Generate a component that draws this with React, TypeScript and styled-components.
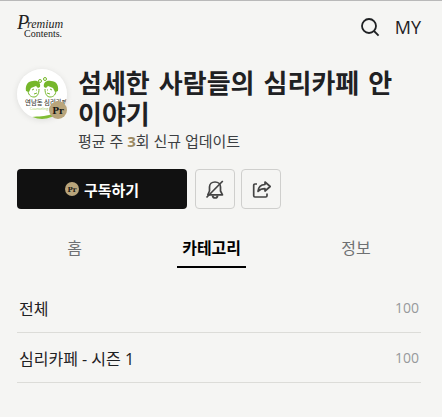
import React from "react";
import styled, { createGlobalStyle } from "styled-components";

const GlobalStyle = createGlobalStyle`
  * { box-sizing: border-box; }
  body {
    margin: 0;
    background: #f5f5f3;
    color: #1f2123;
    font-family: "Open Sans", "Noto Sans CJK KR", sans-serif;
    font-size: 16px;
  }
  h1, p, ul { margin: 0; padding: 0; }
  button { font: inherit; cursor: pointer; }
  a { color: inherit; text-decoration: none; }
`;

const Page = styled.div`
  border-top: 1px solid #b9b9b9;
  padding: 0 21px 0 17px;
`;

const Header = styled.header`
  display: flex;
  align-items: center;
  justify-content: space-between;
  height: 52px;
`;

const LogoLink = styled.a`
  display: flex;
`;

const HeaderActions = styled.div`
  display: flex;
  align-items: center;
  gap: 15px;
`;

const IconButton = styled.button`
  display: flex;
  padding: 0;
  border: 0;
  background: none;
  color: #1f2123;
`;

const MyLink = styled.a`
  font-size: 18px;
  line-height: 24px;
`;

const Channel = styled.section`
  display: flex;
  align-items: flex-start;
  gap: 11px;
  padding-top: 16px;
`;

const Avatar = styled.div`
  position: relative;
  flex: none;
  width: 50px;
  height: 50px;
  border-radius: 50%;
  box-shadow: 0 1px 6px rgba(0, 0, 0, 0.1);
`;

const AvatarBadge = styled.span`
  position: absolute;
  right: 0;
  bottom: 0;
  display: flex;
`;

const Title = styled.h1`
  font-family: "DejaVu Sans", "Noto Sans CJK KR", sans-serif;
  font-size: 26px;
  font-weight: 700;
  line-height: 31px;
  word-break: keep-all;
`;

const Frequency = styled.p`
  color: #3c3f42;
  font-size: 15px;
  line-height: 20px;

  strong {
    color: #9c8a62;
    font-weight: 700;
  }
`;

const Actions = styled.div`
  display: flex;
  gap: 6px;
  margin-top: 18px;
`;

const SubscribeButton = styled.button`
  display: flex;
  align-items: center;
  justify-content: center;
  gap: 5px;
  flex: 0 1 170px;
  height: 40px;
  margin-right: 2px;
  padding: 0;
  border: 0;
  border-radius: 4px;
  background: #111;
  color: #fff;
  font-size: 15px;
  font-weight: 700;
`;

const SquareButton = styled.button`
  display: flex;
  align-items: center;
  justify-content: center;
  width: 40px;
  height: 40px;
  padding: 0;
  border: 1px solid #cfcfcd;
  border-radius: 4px;
  background: transparent;
  color: #444;
`;

const Tabs = styled.nav`
  display: flex;
  justify-content: space-around;
  margin-top: 19px;
`;

const Tab = styled.a<{ $active?: boolean }>`
  padding: 8px 5px 6px;
  border-bottom: 2px solid ${(p) => (p.$active ? "#000" : "transparent")};
  color: ${(p) => (p.$active ? "#000" : "#6e7072")};
  font-weight: ${(p) => (p.$active ? 700 : 400)};
  line-height: 24px;
`;

const CategoryList = styled.ul`
  margin-top: 15px;
  list-style: none;
`;

const CategoryLink = styled.a`
  display: flex;
  align-items: center;
  justify-content: space-between;
  height: 50px;
  padding: 0 2px;
  border-bottom: 1px solid #dcdcd8;
`;

const Count = styled.span`
  color: #97999b;
  font-size: 14px;
`;

const Logo = () => (
  <svg width="50" height="28" viewBox="0 0 50 28" role="img" aria-label="Premium Contents" fill="#222">
    <text x="0" y="16" fontFamily="Liberation Serif, serif" fontStyle="italic" fontSize="20">P</text>
    <text x="10" y="15" fontFamily="Liberation Serif, serif" fontStyle="italic" fontSize="12">remium</text>
    <text x="7" y="24" fontFamily="Liberation Serif, serif" fontSize="10">Contents.</text>
  </svg>
);

const SearchIcon = () => (
  <svg width="20" height="20" viewBox="0 0 20 20" fill="none" stroke="currentColor" strokeWidth="1.8" aria-hidden="true">
    <circle cx="9" cy="9" r="7" />
    <path d="M14 14l4.600 4.600" />
  </svg>
);

const PrBadge = ({ size }: { size: number }) => (
  <svg width={size} height={size} viewBox="0 0 20 20" aria-hidden="true">
    <circle cx="10" cy="10" r="10" fill="#b9a57b" />
    <text x="10" y="14" textAnchor="middle" fontFamily="DejaVu Serif, serif" fontWeight="700" fontSize="10" fill="#1c1a16">Pr</text>
  </svg>
);

const ChannelPicture = () => (
  <svg width="50" height="50" viewBox="0 0 50 50" role="img" aria-label="연남동 심리카페">
    <defs>
      <clipPath id="round"><circle cx="25" cy="25" r="25" /></clipPath>
    </defs>
    <g clipPath="url(#round)">
      <path d="M0 0h50v50H0z" fill="#fff" />
      <path d="M9 22c-1-6 2-10 7-10 5-1 8 2 7 6l-2 1-2-2-5 2-2 4z" fill="#76b72b" />
      <path d="M41 22c1-6-2-10-7-10-5-1-8 2-7 6l2 1 2-2 5 2 2 4z" fill="#76b72b" />
      <g fill="none" stroke="#76b72b" strokeWidth="1">
        <path d="M11 21c0 4 2 7 6 7 3 0 5-3 5-8" />
        <path d="M39 21c0 4-2 7-6 7-3 0-5-3-5-8" />
        <path d="M15 21l2-1M19 21h1M30 21h1M33 20l2 1M17 25l3-1M30 24l3 1" />
        <circle cx="23" cy="12" r="1.500" />
        <circle cx="28" cy="10" r="1.500" />
      </g>
      <text x="8" y="36" fontFamily="Noto Sans CJK KR, sans-serif" fontWeight="500" fontSize="6.400" fill="#3d4038">연남동 심리카페</text>
      <text x="13" y="41" fontFamily="Open Sans, sans-serif" fontSize="3.500" fill="#9bce58">Counseling cafe</text>
      <path d="M15 48c7-1 12 0 20-3v5H15z" fill="#80bd35" />
    </g>
  </svg>
);

const BellOffIcon = () => (
  <svg width="20" height="22" viewBox="0 0 20 22" fill="none" stroke="currentColor" strokeWidth="1.700" strokeLinejoin="round" aria-hidden="true">
    <path d="M4.500 13V9C4.500 6 6.800 4 10 4S15.500 6 15.500 9V13L17.500 16.800H2.800L4.500 13" />
    <path d="M7.500 17.500c.3 1.700 1.300 2.500 2.600 2.500s2.300-.8 2.600-2.500" />
    <path d="M1.500 19.500L17.800 3" />
  </svg>
);

const ShareIcon = () => (
  <svg width="20" height="20" viewBox="0 0 20 20" fill="none" stroke="currentColor" strokeWidth="1.700" strokeLinejoin="round" aria-hidden="true">
    <path d="M6 5H4Q2.700 5 2.700 6.300V16.700Q2.700 18 4 18H14.700Q16 18 16 16.700V14.500" />
    <path d="M14 3L19.200 7.500L14 12V9.700C10.800 9.700 9 10.300 7 12.300C7.300 8.500 9.800 5.700 14 5.500Z" />
  </svg>
);

const tabs = [
  { label: "홈", active: false },
  { label: "카테고리", active: true },
  { label: "정보", active: false },
];

const categories = [
  { name: "전체", count: 100 },
  { name: "심리카페 - 시즌 1", count: 100 },
];

export default function App() {
  return (
    <>
      <GlobalStyle />
      <Page>
        <Header>
          <LogoLink href="#"><Logo /></LogoLink>
          <HeaderActions>
            <IconButton type="button" aria-label="검색"><SearchIcon /></IconButton>
            <MyLink href="#">MY</MyLink>
          </HeaderActions>
        </Header>
        <main>
          <Channel>
            <Avatar>
              <ChannelPicture />
              <AvatarBadge><PrBadge size={18} /></AvatarBadge>
            </Avatar>
            <div>
              <Title>섬세한 사람들의 심리카페 안 이야기</Title>
              <Frequency>평균 주 <strong>3</strong>회 신규 업데이트</Frequency>
            </div>
          </Channel>
          <Actions>
            <SubscribeButton type="button"><PrBadge size={14} />구독하기</SubscribeButton>
            <SquareButton type="button" aria-label="알림 꺼짐"><BellOffIcon /></SquareButton>
            <SquareButton type="button" aria-label="공유"><ShareIcon /></SquareButton>
          </Actions>
          <Tabs>
            {tabs.map((tab) => (
              <Tab key={tab.label} href="#" $active={tab.active} aria-current={tab.active ? "page" : undefined}>
                {tab.label}
              </Tab>
            ))}
          </Tabs>
          <CategoryList>
            {categories.map((category) => (
              <li key={category.name}>
                <CategoryLink href="#">
                  <span>{category.name}</span>
                  <Count>{category.count}</Count>
                </CategoryLink>
              </li>
            ))}
          </CategoryList>
        </main>
      </Page>
    </>
  );
}
